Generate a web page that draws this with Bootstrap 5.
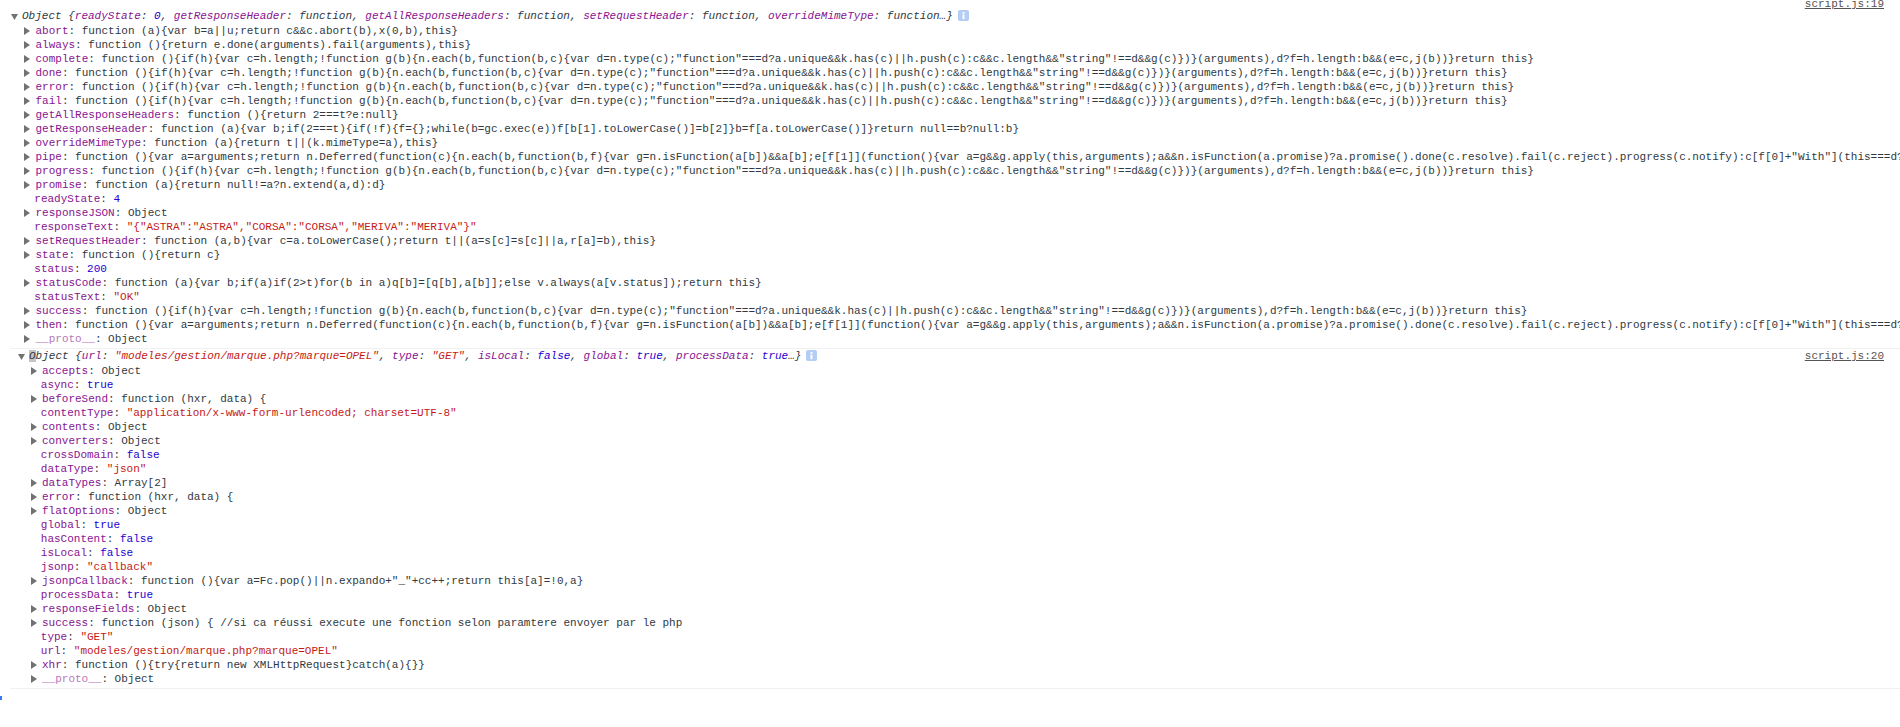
<!DOCTYPE html>
<html lang="en">
<head>
<meta charset="utf-8">
<title>Console</title>
<link href="https://cdn.jsdelivr.net/npm/bootstrap@5.3.0/dist/css/bootstrap.min.css" rel="stylesheet">
<style>
html,body{background:#fff;height:100%;}
body{font-family:"Liberation Mono",monospace;font-size:11px;line-height:14px;color:#303942;overflow:hidden;}
.msg-block{border-bottom:1px solid #f0f0f0;margin-left:10px;padding-bottom:2px;}
.src-top{height:9px;line-height:9px;text-align:right;padding-right:16px;}
.src-link{color:#545454;text-decoration:underline;white-space:nowrap;}
.head-row{height:15px;line-height:15px;white-space:nowrap;font-style:italic;}
.head-row .src-link{font-style:normal;margin-left:auto;padding-right:16px;}
.tw{flex:0 0 auto;display:block;}
.head-one{padding-left:1px;}
.head-one .tw,.head-two .tw{margin-right:4px;}
.head-two{padding-left:8px;}
.cursor-box{background:#c4c4c4;}
.kid-list{margin-left:14.3px;}
.kid-two{margin-left:20.8px;}
.kid{height:14px;white-space:nowrap;overflow:hidden;display:flex;align-items:center;}
.kid .tw{margin-right:5.2px;}
.kid.leaf{padding-left:10px;}
.k{color:#881391;}
.k-dim{color:#881391;opacity:.6;}
.s{color:#c41a16;}
.n{color:#1c00cf;}
.info-ic{display:inline-block;vertical-align:-2px;margin-left:5px;}
.prompt-mark{width:2px;height:4px;background:#367cf1;margin-top:7px;}
</style>
</head>
<body>
<svg width="0" height="0" class="position-absolute">
<defs>
<symbol id="tri-r" viewBox="0 0 6 8"><path d="M0 0L6 4L0 8Z" fill="#727272"/></symbol>
<symbol id="tri-d" viewBox="0 0 7 6"><path d="M0 0H7L3.5 6Z" fill="#727272"/></symbol>
<symbol id="info" viewBox="0 0 11 11"><rect width="11" height="11" rx="2" fill="#b3cdf5"/><rect x="4.5" y="2" width="2" height="1.8" fill="#fff"/><rect x="4.5" y="4.6" width="2" height="4.6" fill="#fff"/></symbol>
</defs>
</svg>
<main>
<section class="msg-block">
<div class="src-top"><a class="src-link">script.js:19</a></div>
<div class="head-row head-one d-flex align-items-center">
<svg class="tw" width="7" height="6"><use href="#tri-d"/></svg>
<span>Object {<span class="k">readyState</span>: <span class="n">0</span>, <span class="k">getResponseHeader</span>: function, <span class="k">getAllResponseHeaders</span>: function, <span class="k">setRequestHeader</span>: function, <span class="k">overrideMimeType</span>: function…}<svg class="info-ic" width="11" height="11"><use href="#info"/></svg></span>
</div>
<div class="kid-list">
<div class="kid"><svg class="tw" width="6" height="8"><use href="#tri-r"/></svg><span><span class="k">abort</span>: function (a){var b=a||u;return c&amp;&amp;c.abort(b),x(0,b),this}</span></div>
<div class="kid"><svg class="tw" width="6" height="8"><use href="#tri-r"/></svg><span><span class="k">always</span>: function (){return e.done(arguments).fail(arguments),this}</span></div>
<div class="kid"><svg class="tw" width="6" height="8"><use href="#tri-r"/></svg><span><span class="k">complete</span>: function (){if(h){var c=h.length;!function g(b){n.each(b,function(b,c){var d=n.type(c);"function"===d?a.unique&amp;&amp;k.has(c)||h.push(c):c&amp;&amp;c.length&amp;&amp;"string"!==d&amp;&amp;g(c)})}(arguments),d?f=h.length:b&amp;&amp;(e=c,j(b))}return this}</span></div>
<div class="kid"><svg class="tw" width="6" height="8"><use href="#tri-r"/></svg><span><span class="k">done</span>: function (){if(h){var c=h.length;!function g(b){n.each(b,function(b,c){var d=n.type(c);"function"===d?a.unique&amp;&amp;k.has(c)||h.push(c):c&amp;&amp;c.length&amp;&amp;"string"!==d&amp;&amp;g(c)})}(arguments),d?f=h.length:b&amp;&amp;(e=c,j(b))}return this}</span></div>
<div class="kid"><svg class="tw" width="6" height="8"><use href="#tri-r"/></svg><span><span class="k">error</span>: function (){if(h){var c=h.length;!function g(b){n.each(b,function(b,c){var d=n.type(c);"function"===d?a.unique&amp;&amp;k.has(c)||h.push(c):c&amp;&amp;c.length&amp;&amp;"string"!==d&amp;&amp;g(c)})}(arguments),d?f=h.length:b&amp;&amp;(e=c,j(b))}return this}</span></div>
<div class="kid"><svg class="tw" width="6" height="8"><use href="#tri-r"/></svg><span><span class="k">fail</span>: function (){if(h){var c=h.length;!function g(b){n.each(b,function(b,c){var d=n.type(c);"function"===d?a.unique&amp;&amp;k.has(c)||h.push(c):c&amp;&amp;c.length&amp;&amp;"string"!==d&amp;&amp;g(c)})}(arguments),d?f=h.length:b&amp;&amp;(e=c,j(b))}return this}</span></div>
<div class="kid"><svg class="tw" width="6" height="8"><use href="#tri-r"/></svg><span><span class="k">getAllResponseHeaders</span>: function (){return 2===t?e:null}</span></div>
<div class="kid"><svg class="tw" width="6" height="8"><use href="#tri-r"/></svg><span><span class="k">getResponseHeader</span>: function (a){var b;if(2===t){if(!f){f={};while(b=gc.exec(e))f[b[1].toLowerCase()]=b[2]}b=f[a.toLowerCase()]}return null==b?null:b}</span></div>
<div class="kid"><svg class="tw" width="6" height="8"><use href="#tri-r"/></svg><span><span class="k">overrideMimeType</span>: function (a){return t||(k.mimeType=a),this}</span></div>
<div class="kid"><svg class="tw" width="6" height="8"><use href="#tri-r"/></svg><span><span class="k">pipe</span>: function (){var a=arguments;return n.Deferred(function(c){n.each(b,function(b,f){var g=n.isFunction(a[b])&amp;&amp;a[b];e[f[1]](function(){var a=g&amp;&amp;g.apply(this,arguments);a&amp;&amp;n.isFunction(a.promise)?a.promise().done(c.resolve).fail(c.reject).progress(c.notify):c[f[0]+"With"](this===d?</span></div>
<div class="kid"><svg class="tw" width="6" height="8"><use href="#tri-r"/></svg><span><span class="k">progress</span>: function (){if(h){var c=h.length;!function g(b){n.each(b,function(b,c){var d=n.type(c);"function"===d?a.unique&amp;&amp;k.has(c)||h.push(c):c&amp;&amp;c.length&amp;&amp;"string"!==d&amp;&amp;g(c)})}(arguments),d?f=h.length:b&amp;&amp;(e=c,j(b))}return this}</span></div>
<div class="kid"><svg class="tw" width="6" height="8"><use href="#tri-r"/></svg><span><span class="k">promise</span>: function (a){return null!=a?n.extend(a,d):d}</span></div>
<div class="kid leaf"><span><span class="k">readyState</span>: <span class="n">4</span></span></div>
<div class="kid"><svg class="tw" width="6" height="8"><use href="#tri-r"/></svg><span><span class="k">responseJSON</span>: Object</span></div>
<div class="kid leaf"><span><span class="k">responseText</span>: <span class="s">"{"ASTRA":"ASTRA","CORSA":"CORSA","MERIVA":"MERIVA"}"</span></span></div>
<div class="kid"><svg class="tw" width="6" height="8"><use href="#tri-r"/></svg><span><span class="k">setRequestHeader</span>: function (a,b){var c=a.toLowerCase();return t||(a=s[c]=s[c]||a,r[a]=b),this}</span></div>
<div class="kid"><svg class="tw" width="6" height="8"><use href="#tri-r"/></svg><span><span class="k">state</span>: function (){return c}</span></div>
<div class="kid leaf"><span><span class="k">status</span>: <span class="n">200</span></span></div>
<div class="kid"><svg class="tw" width="6" height="8"><use href="#tri-r"/></svg><span><span class="k">statusCode</span>: function (a){var b;if(a)if(2&gt;t)for(b in a)q[b]=[q[b],a[b]];else v.always(a[v.status]);return this}</span></div>
<div class="kid leaf"><span><span class="k">statusText</span>: <span class="s">"OK"</span></span></div>
<div class="kid"><svg class="tw" width="6" height="8"><use href="#tri-r"/></svg><span><span class="k">success</span>: function (){if(h){var c=h.length;!function g(b){n.each(b,function(b,c){var d=n.type(c);"function"===d?a.unique&amp;&amp;k.has(c)||h.push(c):c&amp;&amp;c.length&amp;&amp;"string"!==d&amp;&amp;g(c)})}(arguments),d?f=h.length:b&amp;&amp;(e=c,j(b))}return this}</span></div>
<div class="kid"><svg class="tw" width="6" height="8"><use href="#tri-r"/></svg><span><span class="k">then</span>: function (){var a=arguments;return n.Deferred(function(c){n.each(b,function(b,f){var g=n.isFunction(a[b])&amp;&amp;a[b];e[f[1]](function(){var a=g&amp;&amp;g.apply(this,arguments);a&amp;&amp;n.isFunction(a.promise)?a.promise().done(c.resolve).fail(c.reject).progress(c.notify):c[f[0]+"With"](this===d?</span></div>
<div class="kid"><svg class="tw" width="6" height="8"><use href="#tri-r"/></svg><span><span class="k-dim">__proto__</span>: Object</span></div>
</div>
</section>
<section class="msg-block">
<div class="head-row head-two d-flex align-items-center">
<svg class="tw" width="7" height="6"><use href="#tri-d"/></svg>
<span><span class="cursor-box">O</span>bject {<span class="k">url</span>: <span class="s">"modeles/gestion/marque.php?marque=OPEL"</span>, <span class="k">type</span>: <span class="s">"GET"</span>, <span class="k">isLocal</span>: <span class="n">false</span>, <span class="k">global</span>: <span class="n">true</span>, <span class="k">processData</span>: <span class="n">true</span>…}<svg class="info-ic" width="11" height="11"><use href="#info"/></svg></span>
<a class="src-link">script.js:20</a>
</div>
<div class="kid-list kid-two">
<div class="kid"><svg class="tw" width="6" height="8"><use href="#tri-r"/></svg><span><span class="k">accepts</span>: Object</span></div>
<div class="kid leaf"><span><span class="k">async</span>: <span class="n">true</span></span></div>
<div class="kid"><svg class="tw" width="6" height="8"><use href="#tri-r"/></svg><span><span class="k">beforeSend</span>: function (hxr, data) {</span></div>
<div class="kid leaf"><span><span class="k">contentType</span>: <span class="s">"application/x-www-form-urlencoded; charset=UTF-8"</span></span></div>
<div class="kid"><svg class="tw" width="6" height="8"><use href="#tri-r"/></svg><span><span class="k">contents</span>: Object</span></div>
<div class="kid"><svg class="tw" width="6" height="8"><use href="#tri-r"/></svg><span><span class="k">converters</span>: Object</span></div>
<div class="kid leaf"><span><span class="k">crossDomain</span>: <span class="n">false</span></span></div>
<div class="kid leaf"><span><span class="k">dataType</span>: <span class="s">"json"</span></span></div>
<div class="kid"><svg class="tw" width="6" height="8"><use href="#tri-r"/></svg><span><span class="k">dataTypes</span>: Array[2]</span></div>
<div class="kid"><svg class="tw" width="6" height="8"><use href="#tri-r"/></svg><span><span class="k">error</span>: function (hxr, data) {</span></div>
<div class="kid"><svg class="tw" width="6" height="8"><use href="#tri-r"/></svg><span><span class="k">flatOptions</span>: Object</span></div>
<div class="kid leaf"><span><span class="k">global</span>: <span class="n">true</span></span></div>
<div class="kid leaf"><span><span class="k">hasContent</span>: <span class="n">false</span></span></div>
<div class="kid leaf"><span><span class="k">isLocal</span>: <span class="n">false</span></span></div>
<div class="kid leaf"><span><span class="k">jsonp</span>: <span class="s">"callback"</span></span></div>
<div class="kid"><svg class="tw" width="6" height="8"><use href="#tri-r"/></svg><span><span class="k">jsonpCallback</span>: function (){var a=Fc.pop()||n.expando+"_"+cc++;return this[a]=!0,a}</span></div>
<div class="kid leaf"><span><span class="k">processData</span>: <span class="n">true</span></span></div>
<div class="kid"><svg class="tw" width="6" height="8"><use href="#tri-r"/></svg><span><span class="k">responseFields</span>: Object</span></div>
<div class="kid"><svg class="tw" width="6" height="8"><use href="#tri-r"/></svg><span><span class="k">success</span>: function (json) { //si ca réussi execute une fonction selon paramtere envoyer par le php</span></div>
<div class="kid leaf"><span><span class="k">type</span>: <span class="s">"GET"</span></span></div>
<div class="kid leaf"><span><span class="k">url</span>: <span class="s">"modeles/gestion/marque.php?marque=OPEL"</span></span></div>
<div class="kid"><svg class="tw" width="6" height="8"><use href="#tri-r"/></svg><span><span class="k">xhr</span>: function (){try{return new XMLHttpRequest}catch(a){}}</span></div>
<div class="kid"><svg class="tw" width="6" height="8"><use href="#tri-r"/></svg><span><span class="k-dim">__proto__</span>: Object</span></div>
</div>
</section>
<div class="prompt-mark"></div>
</main>
<script src="https://cdn.jsdelivr.net/npm/bootstrap@5.3.0/dist/js/bootstrap.bundle.min.js"></script>
</body>
</html>
